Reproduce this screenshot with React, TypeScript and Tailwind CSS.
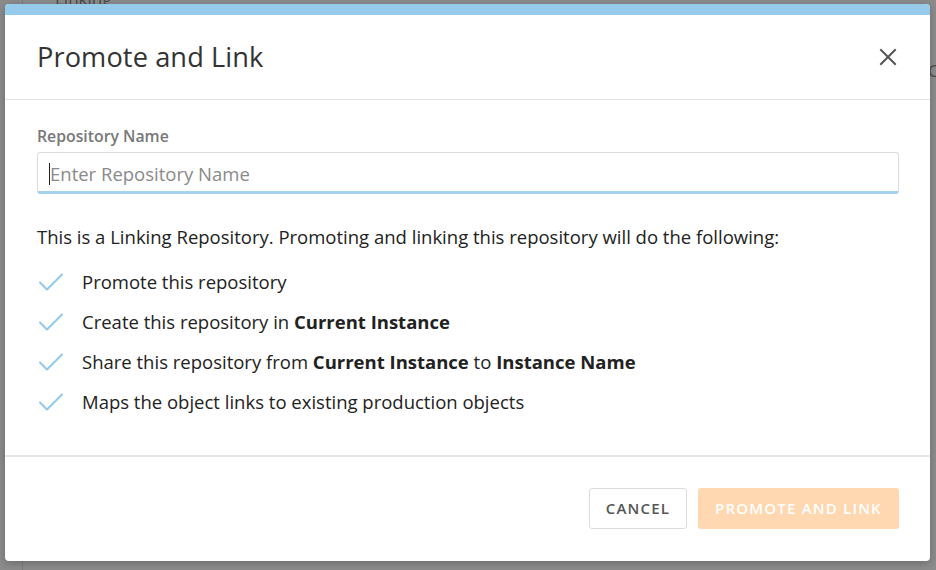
import React from 'react';

function CheckIcon() {
  return (
    <svg width="26" height="20" viewBox="0 0 26 20" className="shrink-0">
      <path d="M2 10.5 L9 17.5 L24 2.5" fill="none" stroke="#8fc8ec" strokeWidth="2" strokeLinecap="round" strokeLinejoin="round" />
    </svg>
  );
}

function CloseIcon() {
  return (
    <svg width="18" height="18" viewBox="0 0 18 18">
      <path d="M2 2 L16 16 M16 2 L2 16" stroke="#555" strokeWidth="2" strokeLinecap="square" />
    </svg>
  );
}

const steps: React.ReactNode[] = [
  <>Promote this repository</>,
  <>
    Create this repository in <b className="font-bold">Current Instance</b>
  </>,
  <>
    Share this repository from <b className="font-bold">Current Instance</b> to{' '}
    <b className="font-bold">Instance Name</b>
  </>,
  <>Maps the object links to existing production objects</>,
];

export default function App() {
  return (
    <div
      className="relative w-[936px] h-[570px] overflow-hidden bg-[#8c8c8c]"
      style={{ fontFamily: '"Open Sans", "Noto Sans", sans-serif' }}
    >
      {/* dimmed page behind the dialog */}
      <div className="absolute left-[22px] top-0 bottom-0 w-px bg-[#7c7c7c]" />
      <div className="absolute left-[55px] top-[-14px] text-[17px] text-[#4a4a4a]">Linking</div>
      <div className="absolute left-[928px] top-[58px] text-[17px] text-[#4a4a4a]">C</div>

      {/* dialog */}
      <div className="absolute left-[5px] top-[4px] w-[925px] rounded-[4px] bg-white shadow-[0_2px_8px_rgba(0,0,0,0.25)] overflow-hidden">
        <div className="h-[11px] bg-[#97cbec]" />
        <div className="flex h-[85px] items-center justify-between border-b border-[#e2e2e2] pl-8 pr-[33px]">
          <h2 className="text-[27.2px] text-[#333] leading-none tracking-[0.1px]">Promote and Link</h2>
          <CloseIcon />
        </div>

        <div className="px-8 pt-[26px] pb-[43px] border-b-2 border-[#e6e6e6]">
          <label className="block text-[15.8px] font-semibold leading-5 text-[#787878]">Repository Name</label>
          <div className="mt-[6px] flex h-[42px] items-center rounded-[3px] border border-[#dcdcdc] border-b-[3px] border-b-[#a5d2ef] pl-[11px] pt-[3px] w-[862px]">
            <span className="h-[22px] w-px bg-[#222]" />
            <span className="text-[18.5px] text-[#8a8a8a]">Enter Repository Name</span>
          </div>

          <p className="mt-[33px] text-[18.5px] leading-5 text-[#222]">
            This is a Linking Repository. Promoting and linking this repository will do the following:
          </p>

          <ul className="mt-[25px] flex flex-col gap-5">
            {steps.map((s, i) => (
              <li key={i} className="flex items-center gap-[18px] pl-[1px] text-[18.5px] leading-5 text-[#222]">
                <CheckIcon />
                <span>{s}</span>
              </li>
            ))}
          </ul>
        </div>

        <div className="flex justify-end gap-[11px] px-[31px] pt-[31px] pb-[32px]">
          <button className="h-[41px] w-[98px] rounded-[3px] border border-[#dddddd] text-[15px] font-semibold tracking-[1.2px] text-[#555]">
            CANCEL
          </button>
          <button className="h-[41px] w-[201px] rounded-[3px] bg-[#ffd7b0] text-[15px] font-semibold tracking-[1.2px] text-white">
            PROMOTE AND LINK
          </button>
        </div>
      </div>
    </div>
  );
}
